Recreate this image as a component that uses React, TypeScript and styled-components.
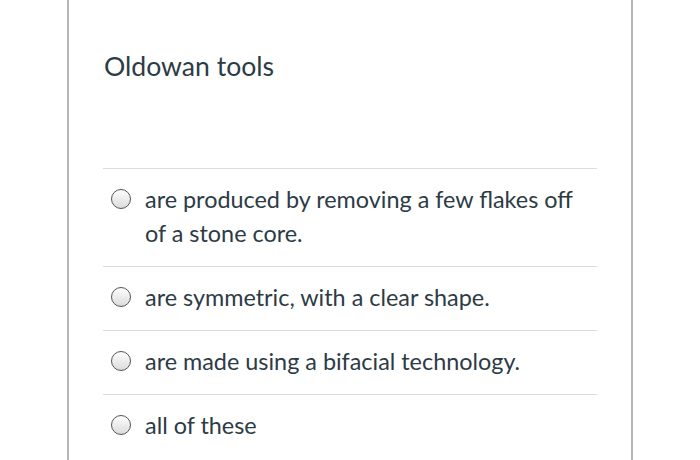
import React from 'react';
import styled, { createGlobalStyle } from 'styled-components';

const GlobalStyle = createGlobalStyle`
  html, body {
    margin: 0;
    padding: 0;
    background: #ffffff;
  }
  body {
    font-family: Lato, "Noto Sans", sans-serif;
    color: #2d3b45;
  }
`;

const Page = styled.div`
  width: 700px;
  height: 460px;
  overflow: hidden;
  padding: 0 67px 0 67px;
  box-sizing: border-box;
`;

const Card = styled.div`
  height: 460px;
  border-left: 2px solid #b5b5b5;
  border-right: 2px solid #b5b5b5;
  box-sizing: border-box;
  padding: 49px 34px 0 34px;
`;

const Title = styled.div`
  font-size: 26.6px;
  line-height: 34px;
  padding-left: 1px;
  margin-bottom: 85px;
`;

const AnswerList = styled.div`
  display: flex;
  flex-direction: column;
`;

const Answer = styled.label`
  display: flex;
  align-items: flex-start;
  border-top: 1px solid #dcdcdc;
  padding: 13px 0 16px 8px;
  font-size: 23.4px;
  line-height: 34px;
`;

const Radio = styled.span`
  flex: none;
  width: 18px;
  height: 18px;
  margin-top: 7px;
  margin-left: 0;
  margin-right: 14px;
  border: 1.5px solid #555555;
  border-radius: 50%;
  background: linear-gradient(#fdfdfd, #dcdcdc);
`;

const AnswerText = styled.span`
  flex: 1;
  padding-right: 20px;
`;

const answers = [
  'are produced by removing a few flakes off of a stone core.',
  'are symmetric, with a clear shape.',
  'are made using a bifacial technology.',
  'all of these',
];

export default function App() {
  return (
    <>
      <GlobalStyle />
      <Page>
        <Card>
          <Title>Oldowan tools</Title>
          <AnswerList>
            {answers.map((a) => (
              <Answer key={a}>
                <Radio />
                <AnswerText>{a}</AnswerText>
              </Answer>
            ))}
          </AnswerList>
        </Card>
      </Page>
    </>
  );
}
